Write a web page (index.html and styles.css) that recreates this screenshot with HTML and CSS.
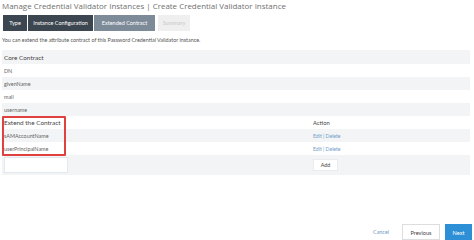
FILE: index.html
```html
<!DOCTYPE html>
<html>
<head>
<meta charset="utf-8">
<link rel="stylesheet" href="styles.css">
</head>
<body>
<div class="page">
  <h1 class="title">Manage Credential Validator Instances | Create Credential Validator Instance</h1>
  <div class="tabs">
    <div class="tab tab-done tab-type">Type</div>
    <div class="tab tab-done tab-inst">Instance Configuration</div>
    <div class="tab tab-active tab-ext">Extended Contract</div>
    <div class="tab tab-next tab-sum">Summary</div>
  </div>
  <p class="intro">You can extend the attribute contract of this Password Credential Validator instance.</p>
  <div class="table">
    <div class="row head gray"><div class="cell">Core Contract</div></div>
    <div class="row"><div class="cell val">DN</div></div>
    <div class="row gray"><div class="cell val">givenName</div></div>
    <div class="row"><div class="cell val">mail</div></div>
    <div class="row gray"><div class="cell val">username</div></div>
    <div class="ext">
      <div class="row head two"><div class="cell">Extend the Contract</div><div class="cell act">Action</div></div>
      <div class="row gray two"><div class="cell val">sAMAccountName</div><div class="cell act link">Edit | Delete</div></div>
      <div class="row two"><div class="cell val">userPrincipalName</div><div class="cell act link">Edit | Delete</div></div>
      <div class="highlight"></div>
    </div>
    <div class="row gray two addrow">
      <div class="cell"><div class="input"></div></div>
      <div class="cell act"><div class="addbtn">Add</div></div>
    </div>
  </div>
  <div class="footer">
    <span class="cancel">Cancel</span>
    <div class="btn prev">Previous</div>
    <div class="btn next">Next</div>
  </div>
</div>
</body>
</html>
```
FILE: styles.css
```css
* { box-sizing: border-box; }
html, body { margin: 0; padding: 0; background: #fff; }
body { font-family: Lato, "Liberation Sans", sans-serif; width: 474px; height: 240px; overflow: hidden; }
.page { padding: 0 2px; display: flex; flex-direction: column; height: 240px; }
.title { margin: 0; font-family: "Open Sans", Lato, sans-serif; font-weight: 400; font-size: 7.95px; line-height: 12px; color: #707070; }
.tabs { display: flex; margin-top: 3px; height: 16px; padding-left: 1px; }
.tab { font-size: 5.5px; color: #fff; display: flex; align-items: center; justify-content: center; height: 16px; }
.tab-done { background: #3c4650; }
.tab-type { width: 24px; margin-right: 1px; }
.tab-inst { width: 65px; margin-right: 1px; }
.tab-ext { width: 61px; background: #7d8b99; margin-right: 3px; }
.tab-sum { width: 32px; background: #efefef; color: #c8c8c8; }
.intro { margin: 0; height: 19px; font-size: 5.4px; line-height: 19px; color: #555; }
.table { position: relative; width: 468px; }
.row { display: flex; height: 13px; align-items: center; }
.table > .row:first-child { height: 14px; }
.gray { background: #f3f4f6; }
.cell { padding-left: 2px; font-size: 5.4px; color: #3a3a3a; }
.row.head .cell { font-size: 6.4px; color: #444; }
.cell.val { font-size: 5.4px; color: #666; }
.two .cell:first-child { width: 310px; }
.cell.act { padding-left: 1px; }
.row.head .cell.act { font-size: 5.8px; }
.row .cell.act.link { font-size: 5.1px; color: #6f9bc6; }
.ext { position: relative; }
.highlight { position: absolute; left: 0; top: 0; width: 64px; height: 40px; border: 2px solid #e0413f; border-radius: 1px; pointer-events: none; }
.addrow { height: 20px; }
.input { width: 64px; height: 16px; background: #fff; border: 1px solid #e3e8ee; }
.addbtn { width: 25px; height: 12px; background: #fff; border: 1px solid #ececec; font-size: 5.4px; color: #444; display: flex; align-items: center; justify-content: center; }
.footer { margin-top: auto; display: flex; justify-content: flex-end; align-items: center; height: 16px; gap: 5px; }
.cancel { font-size: 5.4px; color: #6f9bc6; margin-right: 8px; }
.btn { height: 16px; font-size: 5.6px; display: flex; align-items: center; justify-content: center; }
.prev { width: 38px; border: 1px solid #ddd; color: #444; background: #fff; }
.next { width: 27px; background: #2d8fd5; color: #fff; }
```
